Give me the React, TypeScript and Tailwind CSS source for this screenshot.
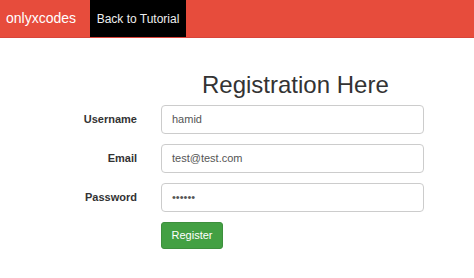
import React from "react";

export default function App() {
  const rows = [
    { label: "Username", value: "hamid" },
    { label: "Email", value: "test@test.com" },
    { label: "Password", value: "••••••" },
  ];
  return (
    <div className="w-[474px] h-[278px] bg-white overflow-hidden" style={{ fontFamily: '"Liberation Sans", Arial, sans-serif' }}>
      <nav className="h-[38px] bg-[#e74c3c] border-b border-[#d9443a] flex items-stretch">
        <div className="w-[90px] flex items-center pl-[6px] text-white text-[14px]">onlyxcodes</div>
        <div className="w-[96px] bg-black flex items-center justify-center text-[#eee] text-[12px]">Back to Tutorial</div>
      </nav>
      <div className="flex flex-col">
        <h1 className="text-[24px] text-[#333] leading-none ml-[202px] mt-[35px]">Registration Here</h1>
        <div className="flex flex-col gap-[10px] mt-[8px]">
          {rows.map((r) => (
            <div key={r.label} className="flex items-center">
              <label className="w-[137px] text-right text-[11px] font-bold text-[#333]">{r.label}</label>
              <div className="ml-[24px] w-[263px] h-[29px] border border-[#ccc] rounded-[4px] flex items-center px-[10px] text-[11px] text-[#555]">
                {r.value}
              </div>
            </div>
          ))}
        </div>
        <div className="ml-[161px] mt-[10px]">
          <button className="w-[62px] h-[27px] bg-[#43a043] border border-[#3d8f3d] rounded-[3px] text-white text-[11px] flex items-center justify-center">Register</button>
        </div>
      </div>
    </div>
  );
}
